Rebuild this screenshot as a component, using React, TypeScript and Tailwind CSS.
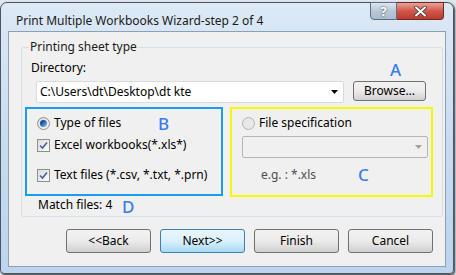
import React from "react";

const font = { fontFamily: '"Noto Sans", "Open Sans", sans-serif' };

const Checkbox: React.FC = () => (
  <span className="w-[13px] h-[13px] border border-[#8e8f8f] bg-gradient-to-br from-[#dcdcdc] to-[#fbfbfb] flex items-center justify-center shrink-0">
    <svg width="9" height="9" viewBox="0 0 9 9">
      <path d="M1 4.5 L3.5 7 L8 1.5" fill="none" stroke="#4b5e9a" strokeWidth="1.6" />
    </svg>
  </span>
);

const Radio: React.FC<{ checked?: boolean; disabled?: boolean }> = ({ checked, disabled }) => (
  <span
    className={`w-[13px] h-[13px] rounded-full border flex items-center justify-center shrink-0 ${
      disabled ? "border-[#b5b5b5] bg-[#e8e8e8]" : "border-[#8e8f8f] bg-gradient-to-br from-[#d5d5d5] to-[#fafafa]"
    }`}
  >
    {checked && <span className="w-[7px] h-[7px] rounded-full bg-gradient-to-br from-[#0d2a5a] via-[#2a70c0] to-[#9fd3f6]" />}
  </span>
);

const Button: React.FC<{ label: string; primary?: boolean }> = ({ label, primary }) => (
  <button
    className={`w-[85px] h-[24px] rounded-[3px] border text-[12px] text-black flex items-center justify-center ${
      primary
        ? "border-[#3c7fb1] bg-gradient-to-b from-[#eaf6fd] via-[#d9f0fc] to-[#a7d9f5]"
        : "border-[#707070] bg-gradient-to-b from-[#f2f2f2] via-[#ebebeb] to-[#d0d0d0]"
    }`}
  >
    {label}
  </button>
);

const Tag: React.FC<{ children: React.ReactNode; className: string }> = ({ children, className }) => (
  <span className={`absolute text-[17px] leading-none font-medium text-[#3a7cf0] ${className}`}>{children}</span>
);

export default function App() {
  return (
    <div className="w-[456px] h-[275px] bg-[#dfe6ee] relative overflow-hidden text-[12px] text-black" style={font}>
      <div className="absolute left-0 top-[2px] w-[454px] h-[272px] rounded-t-[7px] rounded-b-[4px] border border-[#4d5560] bg-gradient-to-b from-[#dce9f6] via-[#c8dcf1] to-[#bcd4ee] flex flex-col shadow-[1px_1px_2px_#333]">
        {/* title bar */}
        <div className="h-[28px] flex items-start justify-between">
          <div className="pl-[15px] pt-[12px] text-[12px] text-[#1a1a1a] leading-none">Print Multiple Workbooks Wizard-step 2 of 4</div>
          <div className="flex mr-[9px] -mt-px">
            <div className="w-[27px] h-[18px] border border-[#5e6f82] rounded-bl-[4px] bg-gradient-to-b from-[#dde6ef] via-[#b9c8d8] to-[#a9bbcf] flex items-center justify-center text-white font-bold text-[13px] leading-none [text-shadow:0_0_2px_#333]">
              ?
            </div>
            <div className="w-[47px] h-[18px] border border-l-0 border-[#6b2a22] rounded-br-[4px] bg-gradient-to-b from-[#e8a397] via-[#d0574a] to-[#c0392b] flex items-center justify-center">
              <svg width="13" height="11" viewBox="0 0 13 11">
                <path d="M2 1.5 L11 9.5 M11 1.5 L2 9.5" stroke="#3a3a3a" strokeWidth="3.6" strokeLinecap="round" />
                <path d="M2 1.5 L11 9.5 M11 1.5 L2 9.5" stroke="#ffffff" strokeWidth="2" strokeLinecap="round" />
              </svg>
            </div>
          </div>
        </div>

        {/* client area */}
        <div className="mx-[7px] mb-[6px] flex-1 border border-[#8d9fb3] bg-[#f0f0f0] flex flex-col px-[12px] pt-[8px]">
          <fieldset className="relative h-[177px] border border-[#d5dfe5] rounded-[3px] pl-[7px] pr-[9px] pb-[6px]">
            <legend className="px-[1px] text-[12px] leading-[14px] text-[#1a1a1a]">Printing sheet type</legend>
            <div className="pl-[2px] mt-[7px] leading-[14px]">Directory:</div>
            <div className="flex items-start mt-[6px] ml-[7px]">
              <div className="w-[308px] h-[22px] bg-white border border-[#dbdbdb] rounded-[2px] flex items-center justify-between pl-[3px] pr-[5px]">
                <span>C:\Users\dt\Desktop\dt kte</span>
                <svg width="7" height="4" viewBox="0 0 7 4"><path d="M0 0 H7 L3.5 4 Z" fill="#000" /></svg>
              </div>
              <button className="ml-[9px] w-[73px] h-[20px] rounded-[3px] border border-[#707070] bg-gradient-to-b from-[#f2f2f2] via-[#ebebeb] to-[#d0d0d0] text-[12px] flex items-center justify-center">
                Browse...
              </button>
            </div>
            <div className="flex mt-[4px] -ml-[4px] gap-[7px]">
              <div className="w-[198px] h-[89px] border-2 border-[#1a9cf3] flex flex-col pl-[10px] pt-[6px]">
                <div className="flex items-center gap-[4px] h-[16px]">
                  <Radio checked />
                  <span>Type of files</span>
                </div>
                <div className="flex items-center gap-[4px] h-[16px] mt-[6px]">
                  <Checkbox />
                  <span>Excel workbooks(*.xls*)</span>
                </div>
                <div className="flex items-center gap-[4px] h-[16px] mt-[14px]">
                  <Checkbox />
                  <span>Text files (*.csv, *.txt, *.prn)</span>
                </div>
              </div>
              <div className="w-[203px] h-[90px] border-2 border-[#f7f700] flex flex-col pl-[10px] pt-[6px]">
                <div className="flex items-center gap-[4px] h-[16px]">
                  <Radio disabled />
                  <span>File specification</span>
                </div>
                <div className="mt-[5px] w-[186px] h-[22px] border border-[#b6b6b6] rounded-[2px] bg-[#f0f0f0] flex items-center justify-end pr-[5px]">
                  <svg width="7" height="4" viewBox="0 0 7 4"><path d="M0 0 H7 L3.5 4 Z" fill="#a0a0a0" /></svg>
                </div>
                <div className="mt-[10px] pl-[19px] text-[#4d4d4d] leading-[14px]">e.g. : *.xls</div>
              </div>
            </div>
            <div className="mt-[1px] pl-[9px] leading-[14px]">Match files: 4</div>
            <Tag className="left-[368px] top-[7px]">A</Tag>
            <Tag className="left-[136px] top-[61px]">B</Tag>
            <Tag className="left-[336px] top-[112px]">C</Tag>
            <Tag className="left-[100px] top-[144px]">D</Tag>
          </fieldset>
          <div className="flex justify-end gap-[9px] mt-[12px]">
            <Button label="<<Back" />
            <Button label="Next>>" primary />
            <Button label="Finish" />
            <Button label="Cancel" />
          </div>
        </div>
      </div>
    </div>
  );
}
